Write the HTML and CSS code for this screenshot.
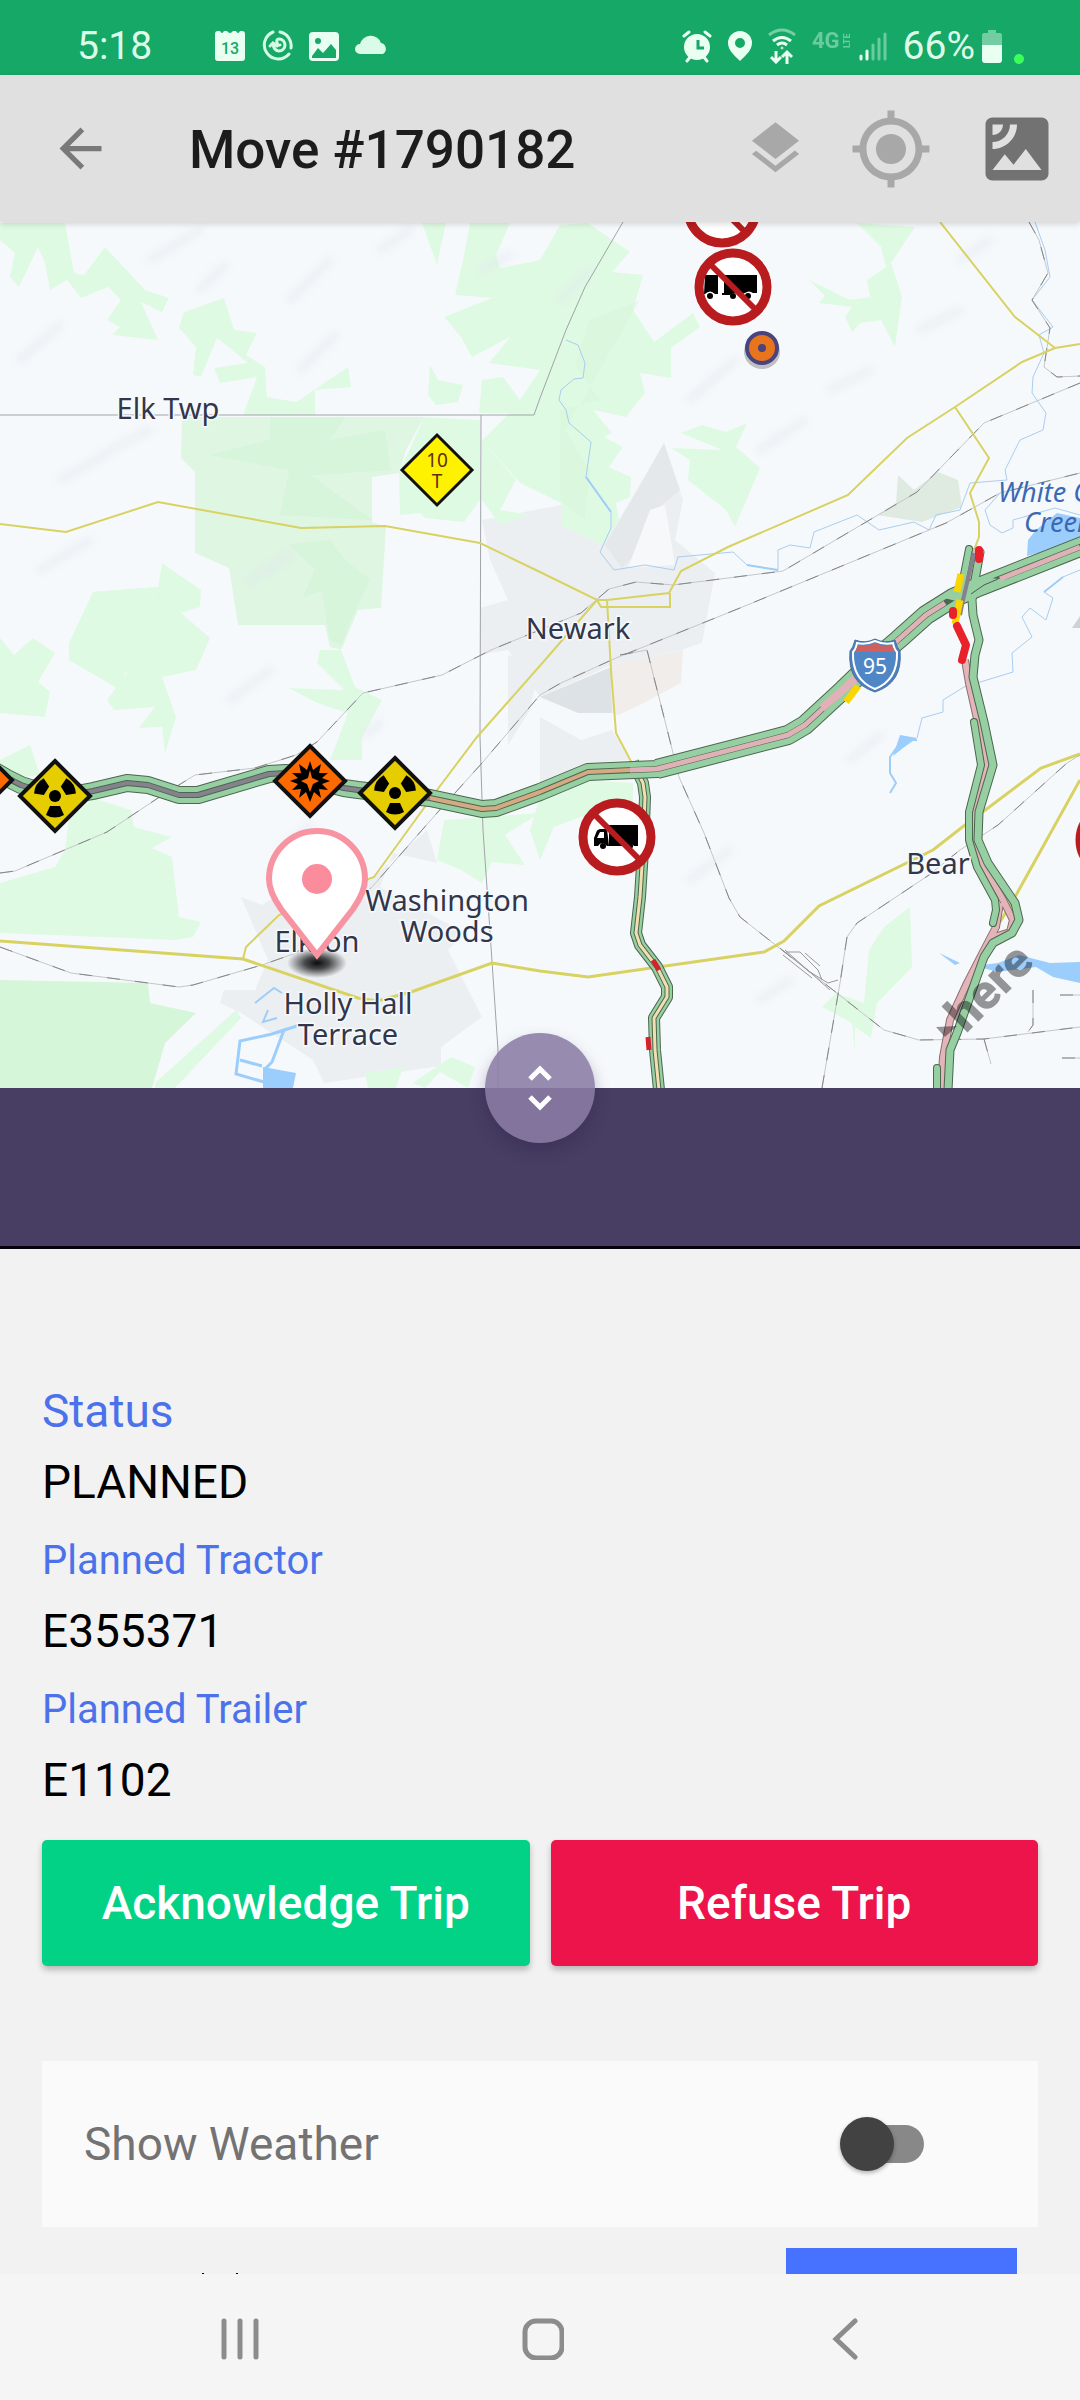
FILE: index.html
```html
<!DOCTYPE html>
<html lang="en">
<head>
  <meta charset="UTF-8">
  <meta name="viewport" content="width=device-width, initial-scale=1">
  <title>Move #1790182</title>
  <link rel="stylesheet" href="styles.css">
</head>
<body>
  <!-- Phone status bar -->
  <div class="status-bar">
    <span class="clock">5:18</span>
    <div class="status-icons">
      <svg width="30" height="36" viewBox="0 0 30 36">
        <path d="M0 6q0-3 3-3h2q2 4 4 0h3q3 4 6 0h3q2 4 4 0h2q3 0 3 3v24q0 3-3 3H3q-3 0-3-3z" fill="#e8fff1"/>
        <text class="calendar-day" x="15" y="26" text-anchor="middle">13</text>
      </svg>
      <svg width="32" height="36" viewBox="0 0 32 36" fill="none" stroke="#d6fbe5" stroke-width="3" stroke-linecap="round">
        <path d="M12 4A14 14 0 1 0 28 26M19 4A14 14 0 0 1 30 20"/>
        <path d="M9 18l3-3 4 3M12 16q1 7 6 7a6 6 0 0 0 0-12q-3 0-2 4q1 3 3 2"/>
      </svg>
      <svg width="30" height="36" viewBox="0 0 30 36">
        <rect y="4" width="30" height="29" rx="4" fill="#e8fff1"/>
        <circle cx="9" cy="13" r="3" fill="#16a866"/>
        <path d="M3 28l6-8 5 5 8-9 5 6v8H3z" fill="#16a866"/>
      </svg>
      <svg width="34" height="36" viewBox="0 0 34 36">
        <path d="M5 26a5 5 0 0 1 0-10a11 11 0 0 1 21-1a6 6 0 0 1 2 11z" fill="#d9fbe7"/>
      </svg>
    </div>
    <div class="status-icons status-right">
      <svg width="30" height="36" viewBox="0 0 30 36">
        <circle cx="15" cy="19" r="13" fill="#e8fff1"/>
        <path d="M2 8l5-4M28 8l-5-4M5 33l4-5M25 33l-4-5" stroke="#e8fff1" stroke-width="3" stroke-linecap="round"/>
        <path d="M16 12v8h6" fill="none" stroke="#16a866" stroke-width="3"/>
      </svg>
      <svg width="24" height="36" viewBox="0 0 24 36">
        <path d="M12 3A12 12 0 0 0 0 15c0 7 6 12 12 18 6-6 12-11 12-18A12 12 0 0 0 12 3zm0 7a5 5 0 1 1 0 10a5 5 0 0 1 0-10z" fill="#e8fff1" fill-rule="evenodd"/>
      </svg>
      <svg width="28" height="36" viewBox="0 0 28 36" fill="none" stroke="#e8fff1" stroke-width="3">
        <path d="M1 7q13-10 26 0" opacity=".45"/>
        <path d="M5 13q9-7 18 0M9 17q5-4 10 0"/>
        <circle cx="14" cy="20" r="1" stroke-width="1"/>
        <path d="M8 23v11M3 29l5 5 5-5M19 36V25M14 29l5-5 5 5"/>
      </svg>
      <svg class="network" width="40" height="36" viewBox="0 0 40 36">
        <text class="network-type" x="0" y="20">4G</text>
        <text class="network-sub" transform="translate(38 20) rotate(-90)">LTE</text>
      </svg>
      <svg class="signal" width="28" height="36" viewBox="0 0 28 36" stroke="#e8fff1" stroke-width="3" stroke-linecap="round">
        <path d="M2 28v3M8 23v8"/>
        <path d="M14 17v14M20 11v20M26 6v25" opacity=".4"/>
      </svg>
      <span class="battery-level">66%</span>
      <svg class="battery" width="20" height="36" viewBox="0 0 20 36">
        <path d="M0 17V7q0-2 2-2h4V2h8v3h4q2 0 2 2v10z" fill="#72cda2"/>
        <path d="M0 17h20v15q0 3-3 3H3q-3 0-3-3z" fill="#e8fff1"/>
      </svg>
      <svg class="privacy-dot" width="10" height="36" viewBox="0 0 10 36"><circle cx="5" cy="31" r="5" fill="#3dff5c"/></svg>
    </div>
  </div>

  <header class="app-bar">
    <button class="icon-button" aria-label="Back">
      <svg width="63" height="63" viewBox="0 0 24 24" fill="#797979"><path d="M20 11H7.83l5.59-5.59L12 4l-8 8 8 8 1.41-1.41L7.83 13H20v-2z"/></svg>
    </button>
    <h1>Move #1790182</h1>
    <button class="icon-button" aria-label="Layers">
      <svg width="63" height="63" viewBox="0 0 24 24" fill="#a8a8a8"><path d="M11.99 18.54l-7.37-5.73L3 14.07l9 7 9-7-1.63-1.27-7.38 5.74zM12 16l7.36-5.73L21 9l-9-7-9 7 1.63 1.27L12 16z"/></svg>
    </button>
    <button class="icon-button" aria-label="My location">
      <svg width="84" height="84" viewBox="0 0 24 24" fill="#a8a8a8"><path d="M12 7.7c-2.4 0-4.3 1.9-4.3 4.3s1.9 4.3 4.3 4.3 4.3-1.9 4.3-4.3-1.9-4.3-4.3-4.3zm8.94 3.3c-.46-4.17-3.77-7.48-7.94-7.94V1h-2v2.06C6.83 3.52 3.52 6.83 3.06 11H1v2h2.06c.46 4.17 3.77 7.48 7.94 7.94V23h2v-2.06c4.17-.46 7.48-3.77 7.94-7.94H23v-2h-2.06zM12 19c-3.87 0-7-3.13-7-7s3.13-7 7-7 7 3.13 7 7-3.13 7-7 7z"/></svg>
    </button>
    <button class="icon-button" aria-label="Satellite view">
      <svg width="84" height="84" viewBox="0 0 24 24" fill="#727272"><path d="M19 3H5c-1.1 0-2 .9-2 2v14c0 1.1.9 2 2 2h14c1.1 0 2-.9 2-2V5c0-1.1-.9-2-2-2zM5 4.99h3C8 6.65 6.66 8 5 8V4.99zM5 12v-2c2.76 0 5-2.25 5-5.01h2C12 8.86 8.87 12 5 12zm0 6l3.5-4.5 2.5 3.01L14.5 12l4.5 6H5z"/></svg>
    </button>
  </header>

  <!-- Map -->
  <svg class="map" viewBox="0 222 1080 866" preserveAspectRatio="xMidYMid slice" role="img" aria-label="Route map">
    <defs>
      <radialGradient id="pin-shadow">
        <stop offset="0" stop-color="#000" stop-opacity=".95"/>
        <stop offset=".4" stop-color="#000" stop-opacity=".7"/>
        <stop offset="1" stop-color="#000" stop-opacity="0"/>
      </radialGradient>
      <filter id="relief-blur"><feGaussianBlur stdDeviation="4"/></filter>
      <path id="i95" d="M-10 768L7 778L21 785L60 797L93 791L127 783L148 785L179 795L198 795L269 774L286 773L344 788L358 790L430 798L482 809L496 808L540 792L588 772L657 769L788 735L805 725L843 690L871 663L898 640L926 615L953 598L976 588L1090 543"/>
      <path id="i95-east" d="M657 769L788 735L805 725L843 690L871 663L898 640L926 615L953 598L976 588L1090 543"/>
      <path id="rt896" d="M633 762L643 783L645 797L643 850L640 897L636 933L640 945L657 967L667 987L667 997L654 1018L655 1050L659 1090"/>
      <path id="rt1-north" d="M980 552L975 580L972 600L973 615L979 640L975 655L973 677L984 722L993 765L979 812L978 840L988 863L1015 903L1019 920L1012 933L993 943L984 957L957 1033L950 1050L948 1090"/>
      <path id="rt1-south" d="M974 722L981 765L969 812L969 840L977 867L995 900L996 910L993 923"/>
      <path id="rt1-ramp" d="M969 549L961 590M937 1068V1092"/>
      <path id="rail-west" d="M0 873L15 871L107 832L158 798L195 775L255 768L296 755L317 742L363 693L442 675L491 650L581 613L609 589L636 582L673 585L783 571L895 505L917 492L984 423L1080 383"/>
      <path id="rail-main" d="M0 947L71 973L179 987L193 985L262 965L296 953L372 887L437 813L482 763L540 695L561 683L616 658L740 608L946 523L1000 493L1080 473"/>
      <path id="rail-south" d="M620 655L647 650L669 737L679 777L704 833L729 898L740 917L778 947L833 990L884 1030L919 1040L984 1039L1080 1027M984 1039L991 1064"/>
      <path id="rail-bear" d="M822 1088L840 983L847 937L857 923L929 875L960 850L998 825L1067 763L1080 755"/>
      <path id="rail-east" d="M1029 222L1039 240L1048 273L1032 300L1050 328L1044 367L1057 377L1080 376M1033 990V1025L1028 1032M1060 995H1080M1062 1058H1080"/>
      <symbol id="hazmat" viewBox="-40 -40 80 80" overflow="visible">
        <path d="M0-35L35 0L0 35L-35 0z" fill="#e6cd00" stroke="#111" stroke-width="4"/>
        <circle r="6"/>
        <path d="M-5 10h10l4 9q-9 5-18 0z"/>
        <path d="M-5 10h10l4 9q-9 5-18 0z" transform="rotate(122)"/>
        <path d="M-5 10h10l4 9q-9 5-18 0z" transform="rotate(238)"/>
      </symbol>
      <symbol id="explosive" viewBox="-40 -40 80 80" overflow="visible">
        <path d="M0-35L35 0L0 35L-35 0z" fill="#ff6a00" stroke="#111" stroke-width="4"/>
        <path d="M0-20L3-11L11-17L9-8L18-8L12-3L20 0L12 3L18 9L9 8L11 17L4 11L0 21L-4 11L-11 17L-9 8L-18 9L-12 3L-20 0L-12-3L-18-8L-9-8L-11-17L-3-11z"/>
        <path d="M0-11L2-3L9 0L3 3L0 11L-3 3L-9 0L-2-3z" fill="#ff6a00"/>
      </symbol>
      <symbol id="no-truck" viewBox="-40 -40 80 80" overflow="visible">
        <circle r="34" fill="#fff"/>
        <path d="M-8-12H21V9h-4q-4-5-8 0H-8z"/>
        <path d="M-10-8h-6q-4 0-5 4l-2 5v8h4q4-6 9 0h2zM-13-5v6h-7l3-6z" fill-rule="evenodd"/>
        <circle cx="-14" cy="9" r="3"/><circle cx="13" cy="9" r="3"/>
        <path d="M-22-22L24 24" stroke="#b81c1f" stroke-width="6"/>
        <circle r="34" fill="none" stroke="#b81c1f" stroke-width="9"/>
      </symbol>
      <symbol id="no-trailer" viewBox="-40 -40 80 80" overflow="visible">
        <circle r="34" fill="#fff"/>
        <path d="M-28-12h13V7h-3q-5-5-10 0h-1zM-9-12H24V6h-4q-4-3-8 0l-7 2q-4-4-8 0h-8V6h2z"/>
        <circle cx="-23" cy="9" r="3"/><circle cx="0" cy="9" r="3"/><circle cx="15" cy="9" r="3"/>
        <path d="M-22-22L24 24" stroke="#b81c1f" stroke-width="6"/>
        <circle r="34" fill="none" stroke="#b81c1f" stroke-width="9"/>
      </symbol>
    </defs>

    <rect y="222" width="1080" height="866" fill="#f6f9fc"/>

    <!-- built-up areas -->
    <g fill="#eceff2">
      <path d="M482 520L561 505L602 540L616 525L664 443L683 500L675 540L715 573L702 643L681 650L612 665L540 697L508 650L480 655V608L508 600L490 560z"/>
      <path d="M508 655L540 665L530 710L508 745z"/>
      <path d="M540 717L581 740L612 730L630 760L588 763L540 785z"/>
      <path d="M241 897L262 905L300 880L370 880L427 830L437 863L393 853L380 887L465 933L448 950L482 1017L441 1047V1066L324 1083L313 1060L241 1013L220 1003L224 990L255 990L268 960z"/>
    </g>
    <path d="M664 443L680 490L655 510L640 550L622 568L605 545L636 493z" fill="#e4e8eb"/>
    <path d="M650 510L665 505L675 565L628 568z" fill="#f6f8fa"/>
    <path d="M540 697L611 667L612 713L578 713z" fill="#dde2e6"/>
    <path d="M611 665L683 650L681 683L640 705L618 715L612 713z" fill="#f1edea"/>
    <path d="M898 475L914 490L938 472L958 480L962 507L922 522L877 515L896 503z" fill="#dfeae1"/>
    <path d="M1072 628L1080 616V628z" fill="#cfd2d5"/>

    <!-- woods -->
    <g fill="#dffae3">
      <path d="M0 223H65L74 273L84 275L105 247L145 290L169 298L162 312L141 302L158 340L112 335L120 327L107 320L121 300L108 287L81 298L67 280L50 290L45 263L38 247L19 287L10 277L15 253L0 240z"/>
      <path d="M184 312L224 298L234 330L257 333L246 355L265 367L267 397L296 402L348 367L351 387L315 390V415H243L257 377L220 383L214 368L248 363L217 338L201 377L193 375L196 347L179 328z"/>
      <path d="M422 223H446L437 265z"/>
      <path d="M470 223H510L496 255L500 268L540 260L560 225L588 223L630 252L612 272L643 275L633 310L654 342L693 313L700 327L671 348V378L640 373L645 393L626 417L593 410L612 433L604 437L623 447L609 467L631 477L630 497L616 503L619 520L602 545L561 525V503L520 483L482 440L510 413H479L482 380L503 377L520 400L540 370L489 363L510 337L472 357L461 337L444 317L492 298L455 295L463 260z"/>
      <path d="M430 365L438 380L463 385L458 402L436 405L428 395z"/>
      <path d="M482 440L516 480L500 510L530 515L500 525L482 500z"/>
      <path d="M681 433L702 425L726 432L747 423L736 447L760 468L735 527L726 510L688 480L690 460L671 448L722 450z"/>
      <path d="M857 223L915 227L891 263L902 297L895 347L881 320L860 323L852 332L845 317L852 307L819 303L825 296L809 280L850 300L870 297L867 280L886 267L881 247z"/>
      <path d="M93 592L158 587L162 563L201 590L200 607L181 613L210 638L196 670L162 677L176 717L165 753L162 727L139 728L155 707L114 710L107 700L127 673L70 655L75 638L100 605L155 598L145 592L100 595z"/>
      <path d="M93 592L158 587L155 597L97 615L80 650L127 668L120 690L69 660V643z"/>
      <path d="M0 638L14 655L33 638L55 653L38 682L50 692L45 717L0 713z"/>
      <path d="M93 798L131 810L134 827L172 837L152 848L172 857L179 917L201 922L193 937L176 940L0 933V883L55 867L65 850L69 820z"/>
      <path d="M289 688L344 690L317 663L320 650H341L355 687L382 700L362 737V760H330L348 713L317 703z"/>
      <path d="M444 820L540 813L505 835L525 865L492 862L482 883L461 870L437 860z"/>
      <path d="M540 797L585 780L633 783V807L581 817L554 827L540 860L530 830z"/>
      <path d="M910 907L912 967L877 1003L871 1038L855 1027V1052L852 1023L822 1007L836 993L864 1003L869 950L884 927z"/>
      <path d="M365 1073L403 1067L396 1088H368zM413 1083L451 1057L475 1067L468 1088L440 1072L425 1088z"/>
      <path d="M155 1083L236 1010L241 1018L175 1088H155z"/>
      <path d="M399 473L424 417L480 420V500L464 522L425 518L420 513L400 515z"/>
      <path d="M0 760L30 745L40 775L0 780z"/>
    </g>
    <g fill="#d5f6d8">
      <path d="M0 980L148 983L150 1003L196 1013L165 1043L152 1088H0z"/>
      <path d="M640 300L590 320L575 365L600 400L560 410L560 500L585 520L590 470L565 430z" opacity=".4"/>
    </g>
    <path d="M182 417H424L406 450L399 473L372 477V522L386 527L381 608L358 610L341 650L330 647L325 625H238L229 568L195 553V472L181 458z" fill="#dff6e2"/>
    <path d="M270 417H345L330 440L385 430L390 470L310 475L372 520L280 515L290 470L210 455L270 440zM290 545L330 540L345 560L370 580L355 610L341 645L330 640L322 590L303 597L315 570z" fill="#cdf4d1" opacity=".5"/>

    <!-- relief -->
    <g class="relief" filter="url(#relief-blur)">
      <path d="M20 360l40-35M150 260l50-30M200 290l25-25M290 300l40-40M60 480l45-25M300 370l35-35M40 570l50-30M230 700l40-30M280 850l30-25M690 400l45-40M760 450l45-30M830 390l40-20M960 260l30-20M690 880l40-30M760 1000l30-20M850 760l30-25M920 330l40-20M380 250l30-20M110 450l40-20M365 735l15-12M560 300l30-30M480 270l30-15M250 580l40-25"/>
    </g>

    <!-- water -->
    <g class="water-line">
      <path d="M566 340L578 345L585 363L583 378L574 379L561 390L559 400L566 410L569 423L591 442L586 477L611 512L611 528L600 552L614 570L645 565L674 570L678 557L733 552L747 565L778 570V550L790 545L810 548L814 532L857 515L879 530L914 522L929 530L936 515L960 510L970 483L1007 480L1005 470L1020 440L1043 430L1046 413L1032 393L1033 377L1044 353L1039 335L1053 327L1032 300L1050 277L1045 250L1035 222"/>
      <path d="M1000 493L985 510L990 525L1002 533L1013 528V520L1055 508L1080 515M1080 570L1063 577L1044 592L1053 598L1046 620L1030 608L1022 617L1032 637L1012 653L1013 672L964 687L943 700V712L922 718L917 738"/>
    </g>
    <path d="M747 565L778 570M890 793L896 783L890 773V757L902 740H917M1044 592L1063 577M255 1003L274 988L282 993M268 1010l-5 12 14-4" fill="none" stroke="#9fcdf8" stroke-width="2"/>
    <path d="M586 477L611 512" stroke="#9fcdf8" stroke-width="2"/>
    <g fill="#9bcdfd">
      <path d="M1027 556L1028 540L1036 530L1057 513L1080 518V542z"/>
      <path d="M939 953L960 963L955 965zM975 966L998 963L1019 955L1050 963L1080 962V983L1053 977L1036 967L998 972z"/>
      <path d="M263 1067L296 1073L293 1088H263z"/>
      <path d="M900 735L917 738L903 748L893 756z"/>
    </g>
    <path d="M264 1082L236 1074L240 1041L272 1034L303 1024M272 1034L284 1030L272 1062L264 1070M240 1060L262 1066" fill="none" stroke="#9bcdfd" stroke-width="3"/>

    <!-- boundaries -->
    <path class="boundary" d="M0 415H534L540 398L566 330L585 287L623 222M481 415L480 737L483 830L489 917L498 1050V1088"/>

    <!-- railways -->
    <g class="rail">
      <use href="#rail-west"/>
      <use href="#rail-main"/>
      <use href="#rail-south"/>
      <use href="#rail-bear"/>
      <use href="#rail-east"/>
    </g>
    <g class="rail-dash">
      <use href="#rail-west"/>
      <use href="#rail-main"/>
      <use href="#rail-south"/>
      <use href="#rail-bear"/>
      <use href="#rail-east"/>
    </g>
    <path d="M780 948L810 972L828 983L838 980M786 952H800L818 970L822 980M805 953L820 966M783 955L812 978M785 950L830 990" fill="none" stroke="#999"/>

    <!-- main roads -->
    <path class="road" d="M0 524L66 532L158 502L301 528L385 526L480 543L540 572L597 600L607 600L669 593L681 571L728 547L848 495L907 438L955 407L1022 362L1055 348L1080 344M597 600L601 607H670V593M940 222L1015 317L1055 348M955 407L989 458L970 493L979 522V537L974 550M607 600L611 670L616 733L633 765M597 600L545 660L477 737L437 790L374 877L340 890L279 915L246 947L243 959"/>
    <path class="road road-wide" d="M0 941L243 959L358 998L377 1001L411 992L492 963L540 971L588 977L764 952L784 941L819 906L933 850L965 825L984 811L1041 768L1080 754M1080 780L1015 897L1000 922"/>

    <!-- highways with live traffic -->
    <g class="highway">
      <use href="#rt896" class="edge w12"/>
      <use href="#rt896" class="flow w10"/>
      <use href="#rt896" class="edge w5"/>
      <use href="#rt896" class="cream w3"/>
      <path d="M653 960L659 970M648 1037L649 1050" stroke="#d3242b" stroke-width="5"/>

      <path d="M976 549L965 592M965 660L969 683L978 723L987 765L976 810L973 840L984 867L1003 900L1013 920L1010 932L991 938M1000 903L996 927L984 950L967 983L950 1020L943 1057L941 1090" stroke="#8b6f72" stroke-width="8"/>
      <path d="M976 549L965 592M965 660L969 683L978 723L987 765L976 810L973 840L984 867L1003 900L1013 920L1010 932L991 938M1000 903L996 927L984 950L967 983L950 1020L943 1057L941 1090" stroke="#e3b4b8" stroke-width="6"/>
      <g stroke-linecap="round">
        <use href="#rt1-south" class="edge w8"/>
        <use href="#rt1-ramp" class="edge w8"/>
        <use href="#rt1-north" class="edge w9"/>
      </g>
      <use href="#i95" class="edge w18"/>
      <use href="#i95-east" class="edge w20"/>
      <g stroke-linecap="round">
        <use href="#rt1-south" class="flow w6"/>
        <use href="#rt1-ramp" class="flow w6"/>
        <use href="#rt1-north" class="flow w7"/>
      </g>
      <use href="#i95" class="flow w16"/>
      <use href="#i95-east" class="flow w18"/>
      <use href="#i95" class="edge w6"/>
      <path d="M-10 768L21 785L60 797L93 791L127 783L148 785L179 795L198 795L269 774L286 773L344 788L358 790L430 798" stroke="#85818d" stroke-width="4"/>
      <path d="M430 798L482 809L496 808L540 792L588 772L630 770" stroke="#d6a982" stroke-width="4"/>
      <path d="M630 770L657 769L788 735L805 725L843 690L871 663L898 640L926 615L945 603" stroke="#e0b1b6" stroke-width="5"/>
      <path d="M822 708L843 690L868 666" stroke="#e0b1b6" stroke-width="8"/>
      <path d="M944 598L990 578L1010 580L960 602z" fill="#96cfa1" stroke="none"/>
      <path d="M1000 579L1080 547" stroke="#e0b1b6" stroke-width="5"/>
      <path d="M971 594L984 585L998 579" stroke="#555" stroke-width="1"/>
      <path d="M974 553L963 600L960 615" stroke="#85818d" stroke-width="4"/>
      <path d="M961 574L957 592M960 600L955 624M846 702L858 686" stroke="#fbd500" stroke-width="7"/>
      <path d="M979 550V559M953 611V615M957 626L966 645L962 660" stroke="#e8212b" stroke-width="8" stroke-linecap="round"/>
    </g>

    <!-- I-95 shield -->
    <g class="shield">
      <path d="M855 640q10 4 20-1q10 5 20 1q2 8 5 11q3 32-25 41q-28-9-25-41q3-3 5-11z" fill="#4a7fc1" stroke="#4a6f9f" stroke-width="1"/>
      <path d="M857 643q9 2 18-2q9 4 18 2q1 6 4 9q1 28-22 37q-23-9-22-37q3-3 4-9z" fill="#4f86c6" stroke="#fff" stroke-width="2"/>
      <path d="M858 645q9 2 17-2q8 4 17 2l3 7H855z" fill="#d0605e"/>
      <text x="875" y="674" text-anchor="middle">95</text>
    </g>

    <!-- place names -->
    <g class="place">
      <text x="168" y="419">Elk Twp</text>
      <text x="578" y="639">Newark</text>
      <text x="447" y="911">Washington</text>
      <text x="447" y="942">Woods</text>
      <text x="317" y="952">Elkton</text>
      <text x="348" y="1014">Holly Hall</text>
      <text x="348" y="1045">Terrace</text>
      <text x="938" y="874">Bear</text>
    </g>
    <g class="place-water">
      <text x="998" y="502">White Clay</text>
      <text x="1024" y="532">Creek</text>
    </g>

    <!-- warnings along the route -->
    <use href="#explosive" x="-63" y="740" width="80" height="80"/>
    <use href="#hazmat" x="15" y="756" width="80" height="80"/>
    <use href="#explosive" x="270" y="741" width="80" height="80"/>
    <use href="#hazmat" x="355" y="753" width="80" height="80"/>
    <use href="#no-trailer" x="682" y="169" width="80" height="80"/>
    <use href="#no-trailer" x="693" y="247" width="80" height="80"/>
    <use href="#no-truck" x="577" y="797" width="80" height="80"/>
    <use href="#no-truck" x="1074" y="800" width="80" height="80"/>
    <path d="M437 435L472 470L437 505L402 470z" fill="#fff200" stroke="#111" stroke-width="3"/>
    <text class="weight-limit" x="437" y="467">10</text>
    <text class="weight-limit" x="437" y="488">T</text>
    <ellipse cx="762" cy="352" rx="18" ry="17" fill="#555" opacity=".35"/>
    <circle cx="762" cy="348" r="15" fill="#e8751c" stroke="#4a4380" stroke-width="4"/>
    <circle cx="762" cy="348" r="4" fill="#4a4380"/>

    <!-- destination pin -->
    <ellipse cx="317" cy="963" rx="30" ry="15" fill="url(#pin-shadow)"/>
    <path d="M317 955L281 909Q269 892 269 879A48 48 0 0 1 365 879Q365 892 353 909z" fill="#fff" stroke="#f893a1" stroke-width="6"/>
    <circle cx="317" cy="879" r="15" fill="#fa8c9c"/>

    <g class="here-logo">
      <path d="M936 1027L945 1037L957 1026z"/>
      <text transform="translate(966 1034) rotate(-45)">here</text>
    </g>
  </svg>

  <!-- Map / details divider -->
  <div class="splitter">
    <button class="splitter-handle" aria-label="Resize map">
      <svg width="24" height="48" viewBox="0 0 24 48" fill="none" stroke="#fff" stroke-width="5"><path d="M2 15l10-10 10 10M2 33l10 10 10-10"/></svg>
    </button>
  </div>

  <main class="details">
    <dl class="facts">
      <div class="fact fact-main"><dt>Status</dt><dd>PLANNED</dd></div>
      <div class="fact"><dt>Planned Tractor</dt><dd>E355371</dd></div>
      <div class="fact"><dt>Planned Trailer</dt><dd>E1102</dd></div>
    </dl>

    <div class="actions">
      <button class="action accept">Acknowledge Trip</button>
      <button class="action refuse">Refuse Trip</button>
    </div>

    <div class="option">
      <label for="weather">Show Weather</label>
      <input type="checkbox" class="switch" id="weather" role="switch">
    </div>

    <div class="next-row">
      <svg width="40" height="28" viewBox="0 0 40 28"><path d="M2 25h2v3h-2zM36 25h2v3h-2z"/></svg>
      <button class="next-button" aria-label="Open"></button>
    </div>
  </main>

  <nav class="nav-bar">
    <button class="icon-button" aria-label="Recent apps">
      <svg width="42" height="42" viewBox="0 0 42 42" stroke="#8c8c8c" stroke-width="5" stroke-linecap="round"><path d="M5 3v36M21 3v36M37 3v36"/></svg>
    </button>
    <button class="icon-button" aria-label="Home">
      <svg width="42" height="42" viewBox="0 0 42 42" fill="none" stroke="#8c8c8c" stroke-width="5"><rect x="3" y="3" width="37" height="37" rx="11"/></svg>
    </button>
    <button class="icon-button" aria-label="Back to previous app">
      <svg width="42" height="42" viewBox="0 0 42 42" fill="none" stroke="#8c8c8c" stroke-width="5" stroke-linecap="round"><path d="M30 3L11 21L30 39"/></svg>
    </button>
  </nav>
</body>
</html>
```

FILE: styles.css
```css
* {
  box-sizing: border-box;
}
body {
  margin: 0;
  height: 100vh;
  display: flex;
  flex-direction: column;
  overflow: hidden;
  background: #f2f2f2;
  font-family: Roboto, "Liberation Sans", sans-serif;
}
svg {
  display: block;
  flex: none;
}
button {
  border: 0;
  padding: 0;
  font-family: inherit;
}
.icon-button {
  background: none;
}

/* Phone status bar */
.status-bar {
  flex: none;
  height: 75px;
  padding: 17px 56px 0 77px;
  display: flex;
  align-items: center;
  background: #16a866;
  color: #dcfce9;
  font-size: 39px;
}
.clock {
  margin-right: 63px;
}
.status-icons {
  display: flex;
  align-items: center;
  gap: 16px;
}
.status-right {
  margin-left: auto;
}
.calendar-day {
  font-size: 16px;
  font-weight: 500;
  fill: #16a866;
}
.network {
  opacity: 0.4;
  fill: #e8fff1;
}
.network-type {
  font-size: 22px;
  font-weight: 700;
}
.network-sub {
  font-size: 9px;
  font-weight: 700;
}
.signal,
.battery {
  margin-left: -9px;
}
.privacy-dot {
  margin-left: -4px;
}

/* App bar */
.app-bar {
  flex: none;
  height: 147px;
  padding: 0 21px 0 49px;
  display: flex;
  align-items: center;
  gap: 42px;
  background: #e0e0e0;
  box-shadow: 0 2px 6px rgba(0, 0, 0, 0.15);
  position: relative;
}
.app-bar h1 {
  flex: 1;
  margin: 2px 0 0 35px;
  font-size: 53px;
  font-weight: 500;
  color: #1c1c1c;
}

/* Map */
.map {
  width: 100%;
  aspect-ratio: 1080 / 866;
}
.relief {
  fill: none;
  stroke: #dfe6ec;
  stroke-width: 8;
  stroke-linecap: round;
  opacity: 0.5;
}
.boundary {
  fill: none;
  stroke: #a0a3a8;
  stroke-width: 1;
}
.road {
  fill: none;
  stroke: #d8d262;
  stroke-width: 2;
}
.road-wide {
  stroke-width: 3;
}
.rail {
  fill: none;
  stroke: #c4c6c9;
  stroke-width: 1;
}
.rail-dash {
  fill: none;
  stroke: #858585;
  stroke-width: 1;
  stroke-dasharray: 13 15;
}
.water-line {
  fill: none;
  stroke: #a9cdf0;
  stroke-width: 1;
}
.highway {
  fill: none;
  stroke-linejoin: round;
}
.edge { stroke: #4c6650; }
.flow { stroke: #96cfa1; }
.cream { stroke: #f3deb0; }
.w3 { stroke-width: 3px; }
.w5 { stroke-width: 5px; }
.w6 { stroke-width: 6px; }
.w7 { stroke-width: 7px; }
.w8 { stroke-width: 8px; }
.w9 { stroke-width: 9px; }
.w10 { stroke-width: 10px; }
.w12 { stroke-width: 12px; }
.w16 { stroke-width: 16px; }
.w18 { stroke-width: 18px; }
.w20 { stroke-width: 20px; }
.shield text {
  font: 21px "Noto Sans", sans-serif;
  fill: #fff;
}
.place {
  font: 29px "Noto Sans", sans-serif;
  text-anchor: middle;
  fill: #32364a;
  stroke: #f6f9fd;
  stroke-width: 3px;
  paint-order: stroke;
}
.place-water {
  font: italic 27px "Noto Sans", sans-serif;
  fill: #3b68b5;
}
.weight-limit {
  font: 19px "Noto Sans", sans-serif;
  text-anchor: middle;
  fill: #5e2f0d;
}
.here-logo {
  font: 900 49px Roboto, sans-serif;
  opacity: 0.4;
}

/* Map / details divider */
.splitter {
  flex: none;
  position: relative;
  height: 161px;
  background: #483d63;
  border-bottom: 3px solid #07000f;
}
.splitter-handle {
  position: absolute;
  top: -55px;
  left: calc(50% - 55px);
  width: 110px;
  height: 110px;
  border-radius: 50%;
  display: flex;
  align-items: center;
  justify-content: center;
  background: rgba(138, 124, 165, 0.88);
  box-shadow: 0 8px 16px rgba(40, 30, 70, 0.3);
}

/* Trip details */
.details {
  flex: 1;
  min-height: 0;
  overflow: hidden;
  padding: 134px 42px 0;
}
.facts {
  margin: 0;
}
.fact + .fact {
  margin-top: 25px;
}
.fact dt {
  font-size: 40px;
  line-height: 54px;
  color: #4b72ea;
}
.fact-main dt {
  font-size: 46px;
  line-height: 56px;
}
.fact dd {
  margin: 16px 0 0;
  font-size: 46px;
  line-height: 54px;
  color: #000;
}
.actions {
  display: grid;
  grid-template-columns: 1fr 1fr;
  gap: 21px;
  margin-top: 33px;
}
.action {
  height: 126px;
  border-radius: 5px;
  color: #fff;
  font-size: 46px;
  font-weight: 500;
  box-shadow: 0 4px 6px rgba(0, 0, 0, 0.24);
}
.accept { background: #02d286; }
.refuse { background: #ed144c; }
.option {
  height: 166px;
  margin-top: 95px;
  padding: 0 114px 0 42px;
  display: flex;
  align-items: center;
  justify-content: space-between;
  background: #fafafa;
  color: #737373;
  font-size: 46px;
}
.switch {
  appearance: none;
  position: relative;
  width: 84px;
  height: 54px;
  margin: 0;
}
.switch::before {
  content: "";
  position: absolute;
  inset: 8px 0 8px 8px;
  border-radius: 19px;
  background: #888;
}
.switch::after {
  content: "";
  position: absolute;
  left: 0;
  top: 0;
  width: 54px;
  height: 54px;
  border-radius: 50%;
  background: #424242;
  box-shadow: 0 2px 4px rgba(0, 0, 0, 0.3);
}
.next-row {
  margin-top: 21px;
  padding: 0 21px 0 158px;
  display: flex;
  justify-content: space-between;
}
.next-button {
  width: 231px;
  height: 105px;
  background: #4672ff;
}

/* Phone navigation */
.nav-bar {
  flex: none;
  height: 126px;
  padding: 4px 213px 0 219px;
  display: flex;
  align-items: center;
  justify-content: space-between;
  background: #f5f5f5;
}
```
